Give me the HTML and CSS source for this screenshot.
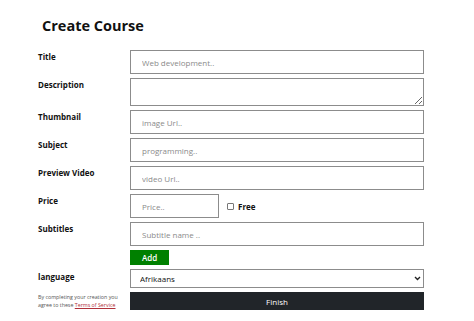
FILE: index.html
```html
<!DOCTYPE html>
<html>
<head>
    <title>Create Course</title>
    <link rel="stylesheet" href="styles.css">
</head>
<body>
    <div class="page">
        <h1 class="page-title">Create Course</h1>

        <form class="course-form">
            <label class="field-label">Title</label>
            <input type="text" class="field" placeholder="Web development..">

            <label class="field-label">Description</label>
            <textarea class="field field-area"></textarea>

            <label class="field-label">Thumbnail</label>
            <input type="text" class="field" placeholder="image Url..">

            <label class="field-label">Subject</label>
            <input type="text" class="field" placeholder="programming..">

            <label class="field-label">Preview Video</label>
            <input type="text" class="field" placeholder="video Url..">

            <label class="field-label">Price</label>
            <div class="price-row">
                <input type="text" class="field field-price" placeholder="Price..">
                <label class="free-check"><span class="box"></span>Free</label>
            </div>

            <label class="field-label">Subtitles</label>
            <input type="text" class="field" placeholder="Subtitle name ..">

            <span></span>
            <div><button type="button" class="btn-add">Add</button></div>

            <label class="field-label label-lang">language</label>
            <div class="select-wrap">
                <select class="field field-select">
                    <option>Afrikaans</option>
                    <option>Albanian</option>
                    <option>Arabic</option>
                </select>
                <svg class="chevron" width="7" height="5" viewBox="0 0 7 5">
                    <path d="M1 1 L3.5 3.5 L6 1" fill="none" stroke="#222" stroke-width="1.4"/>
                </svg>
            </div>

            <p class="terms">By completing your creation you<br>agree to these <a href="#">Terms of Service</a></p>
            <button type="button" class="btn-finish">Finish</button>
        </form>
    </div>
</body>
</html>
```

FILE: styles.css
```css
body {
    margin: 0;
    background: white;
    font-family: 'Open Sans', 'Noto Sans', sans-serif;
    color: #111;
}

.page {
    padding: 14px 0 0 38px;
}

.page-title {
    margin: 0 0 13px 4px;
    font-size: 14.5px;
    font-weight: bold;
    line-height: 23px;
}

.course-form {
    display: grid;
    grid-template-columns: 92px 294px;
    row-gap: 4px;
}

.field-label {
    font-size: 8px;
    font-weight: bold;
    line-height: 12px;
    padding-top: 1px;
}

.label-lang {
    padding-top: 2px;
}

.field {
    box-sizing: border-box;
    display: block;
    width: 100%;
    height: 24px;
    margin: 0;
    padding: 0 11px;
    border: 1px solid #8c8c8c;
    border-radius: 0;
    font-family: inherit;
    font-size: 8px;
    background: white;
    outline: none;
}

.field::placeholder {
    color: #8a8a8a;
}

.field-area {
    height: 28px;
    padding: 4px 11px;
}

.price-row {
    display: flex;
    align-items: center;
}

.field-price {
    width: 89px;
}

.free-check {
    display: flex;
    align-items: center;
    margin-left: 8px;
    font-size: 8px;
    font-weight: bold;
}

.free-check .box {
    width: 5px;
    height: 5px;
    border: 1px solid #777;
    border-radius: 1px;
    margin-right: 4px;
}

.btn-add {
    display: block;
    width: 39px;
    height: 15px;
    padding: 0;
    border: none;
    background: #008000;
    color: white;
    font-family: inherit;
    font-size: 8px;
    font-weight: 600;
}

.select-wrap {
    position: relative;
}

.field-select {
    height: 19px;
    padding: 0 9px;
    appearance: none;
    color: #111;
}

.chevron {
    position: absolute;
    right: 3px;
    top: 7px;
}

.terms {
    margin: 0;
    padding-top: 1px;
    font-size: 5.3px;
    line-height: 8px;
    white-space: nowrap;
    color: #555;
}

.terms a {
    color: #b0303a;
}

.btn-finish {
    height: 18px;
    padding: 0;
    border: none;
    background: #212529;
    color: white;
    font-family: inherit;
    font-size: 8px;
}
```
